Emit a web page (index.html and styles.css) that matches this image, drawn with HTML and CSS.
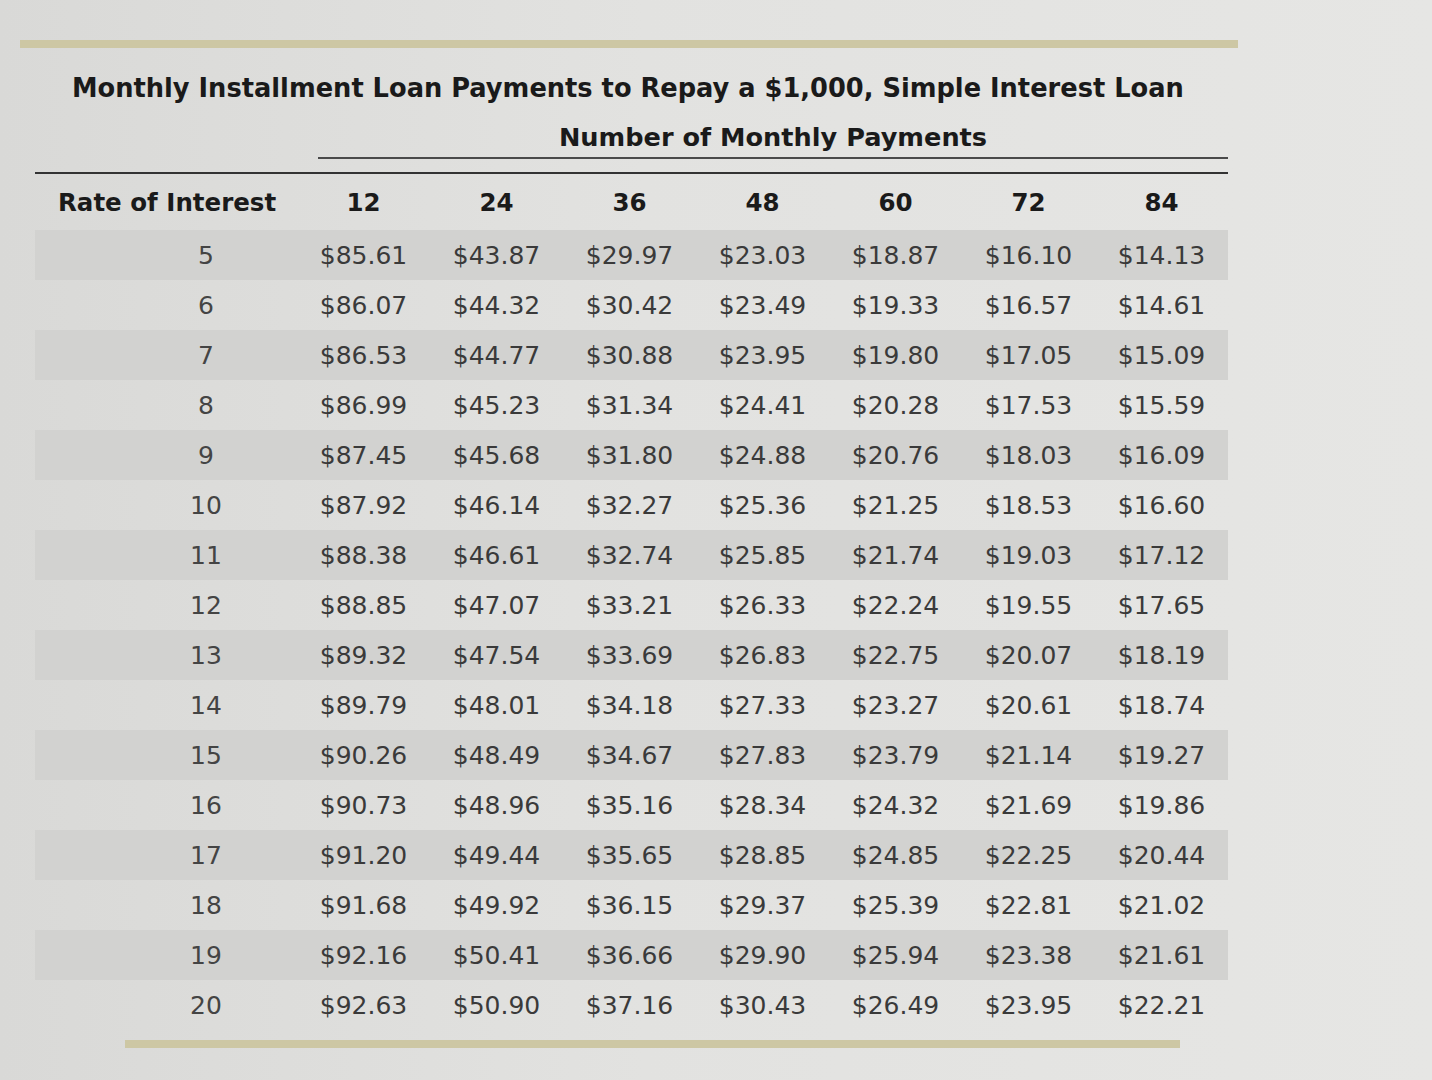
FILE: index.html
```html
<!DOCTYPE html>
<html lang="en">
<head>
<meta charset="utf-8">
<title>Monthly Installment Loan Payments</title>
<link rel="stylesheet" href="styles.css">
</head>
<body>
<div class="page">
  <div class="bar bar-top"></div>
  <h1 class="title">Monthly Installment Loan Payments to Repay a $1,000, Simple Interest Loan</h1>
  <div class="table">
    <div class="group-head">Number of Monthly Payments</div>
    <div class="rule"></div>
    <div class="row head">
      <div class="rate-head">Rate of Interest</div>
      <div>12</div><div>24</div><div>36</div><div>48</div><div>60</div><div>72</div><div>84</div>
    </div>
    <div class="row stripe"><div class="rate">5</div><div>$85.61</div><div>$43.87</div><div>$29.97</div><div>$23.03</div><div>$18.87</div><div>$16.10</div><div>$14.13</div></div>
    <div class="row"><div class="rate">6</div><div>$86.07</div><div>$44.32</div><div>$30.42</div><div>$23.49</div><div>$19.33</div><div>$16.57</div><div>$14.61</div></div>
    <div class="row stripe"><div class="rate">7</div><div>$86.53</div><div>$44.77</div><div>$30.88</div><div>$23.95</div><div>$19.80</div><div>$17.05</div><div>$15.09</div></div>
    <div class="row"><div class="rate">8</div><div>$86.99</div><div>$45.23</div><div>$31.34</div><div>$24.41</div><div>$20.28</div><div>$17.53</div><div>$15.59</div></div>
    <div class="row stripe"><div class="rate">9</div><div>$87.45</div><div>$45.68</div><div>$31.80</div><div>$24.88</div><div>$20.76</div><div>$18.03</div><div>$16.09</div></div>
    <div class="row"><div class="rate">10</div><div>$87.92</div><div>$46.14</div><div>$32.27</div><div>$25.36</div><div>$21.25</div><div>$18.53</div><div>$16.60</div></div>
    <div class="row stripe"><div class="rate">11</div><div>$88.38</div><div>$46.61</div><div>$32.74</div><div>$25.85</div><div>$21.74</div><div>$19.03</div><div>$17.12</div></div>
    <div class="row"><div class="rate">12</div><div>$88.85</div><div>$47.07</div><div>$33.21</div><div>$26.33</div><div>$22.24</div><div>$19.55</div><div>$17.65</div></div>
    <div class="row stripe"><div class="rate">13</div><div>$89.32</div><div>$47.54</div><div>$33.69</div><div>$26.83</div><div>$22.75</div><div>$20.07</div><div>$18.19</div></div>
    <div class="row"><div class="rate">14</div><div>$89.79</div><div>$48.01</div><div>$34.18</div><div>$27.33</div><div>$23.27</div><div>$20.61</div><div>$18.74</div></div>
    <div class="row stripe"><div class="rate">15</div><div>$90.26</div><div>$48.49</div><div>$34.67</div><div>$27.83</div><div>$23.79</div><div>$21.14</div><div>$19.27</div></div>
    <div class="row"><div class="rate">16</div><div>$90.73</div><div>$48.96</div><div>$35.16</div><div>$28.34</div><div>$24.32</div><div>$21.69</div><div>$19.86</div></div>
    <div class="row stripe"><div class="rate">17</div><div>$91.20</div><div>$49.44</div><div>$35.65</div><div>$28.85</div><div>$24.85</div><div>$22.25</div><div>$20.44</div></div>
    <div class="row"><div class="rate">18</div><div>$91.68</div><div>$49.92</div><div>$36.15</div><div>$29.37</div><div>$25.39</div><div>$22.81</div><div>$21.02</div></div>
    <div class="row stripe"><div class="rate">19</div><div>$92.16</div><div>$50.41</div><div>$36.66</div><div>$29.90</div><div>$25.94</div><div>$23.38</div><div>$21.61</div></div>
    <div class="row"><div class="rate">20</div><div>$92.63</div><div>$50.90</div><div>$37.16</div><div>$30.43</div><div>$26.49</div><div>$23.95</div><div>$22.21</div></div>
  </div>
  <div class="bar bar-bottom"></div>
</div>
</body>
</html>
```

FILE: styles.css
```css
html, body {
  margin: 0;
  padding: 0;
}

body {
  width: 1432px;
  height: 1080px;
  overflow: hidden;
  background: linear-gradient(90deg, #d9d9d7 0%, #e2e2e0 45%, #e6e6e4 100%);
  font-family: "DejaVu Sans", Verdana, sans-serif;
  color: #333;
}

.page {
  padding-top: 40px;
}

.bar {
  height: 8px;
  background: #cdc7a4;
}

.bar-top {
  margin-left: 20px;
  width: 1218px;
}

.bar-bottom {
  margin-top: 10px;
  margin-left: 125px;
  width: 1055px;
}

.title {
  margin: 25px 0 0 72px;
  font-size: 25.7px;
  line-height: 30px;
  font-weight: bold;
  color: #1a1a1a;
  white-space: nowrap;
}

.table {
  margin-left: 35px;
  width: 1193px;
}

.group-head {
  margin-top: 19px;
  margin-left: 283px;
  padding-bottom: 5px;
  border-bottom: 2px solid #4a4a4a;
  text-align: center;
  font-size: 25.6px;
  line-height: 30px;
  font-weight: bold;
  color: #1a1a1a;
}

.rule {
  margin-top: 13px;
  border-top: 2px solid #333;
}

.row {
  display: grid;
  grid-template-columns: 262px repeat(7, 133px);
  align-items: center;
  height: 50px;
  font-size: 25px;
  text-align: center;
  color: #3a3a3a;
  white-space: nowrap;
}

.row.head {
  height: 56px;
  font-size: 24.5px;
  font-weight: bold;
  color: #1a1a1a;
}

.rate-head {
  text-align: left;
  padding-left: 23px;
}

.rate {
  padding-left: 80px;
  color: #444;
}

.stripe {
  background: #d2d2d0;
}
```
